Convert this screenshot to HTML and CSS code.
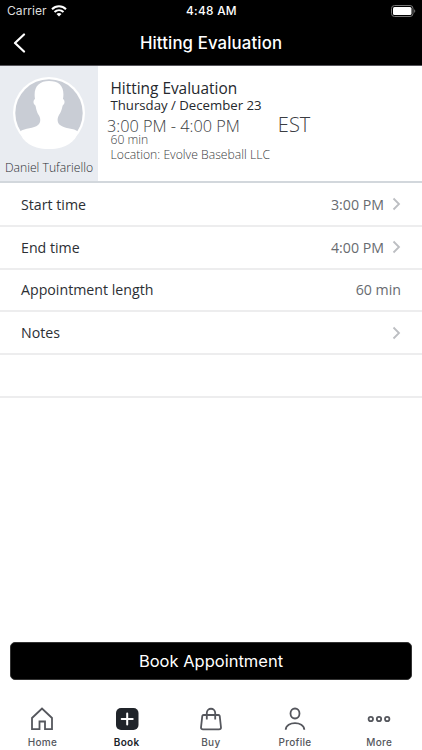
FILE: index.html
```html
<!DOCTYPE html>
<html lang="en">
<head>
<meta charset="utf-8">
<title>Hitting Evaluation</title>
<link rel="stylesheet" href="styles.css">
</head>
<body>
<div class="app">
  <header class="top">
    <div class="status">
      <div class="carrier"><span>Carrier</span>
        <svg width="16" height="12" viewBox="0 0 16 12" fill="none" stroke="#fff" stroke-width="2"><path d="M1 4.2C5 .3 11 .3 15 4.2M3.5 7C6.1 4.5 9.9 4.5 12.5 7"/><path d="M5.5 8.9C7 7.6 9 7.6 10.5 8.9L8 11.5Z" fill="#fff" stroke="none"/></svg>
      </div>
      <div class="clock">4:48 AM</div>
      <svg class="battery" width="25" height="12" viewBox="0 0 25 12"><rect x=".5" y=".5" width="21.5" height="11" rx="3" fill="none" stroke="#777"/><rect x="2" y="2" width="18.5" height="8" rx="1.5" fill="#fff"/><path d="M23.2 4.2C24.6 4.7 24.6 7.3 23.2 7.8Z" fill="#777"/></svg>
    </div>
    <div class="nav">
      <svg width="13" height="20" viewBox="0 0 13 20" fill="none" stroke="#fff" stroke-width="2.2" stroke-linecap="round" stroke-linejoin="round"><path d="M11 1.5 2 10l9 8.5"/></svg>
      <h1>Hitting Evaluation</h1>
      <span></span>
    </div>
  </header>
  <section class="summary">
    <div class="person">
      <svg width="72" height="72" viewBox="0 0 72 72"><circle cx="36" cy="36" r="36" fill="#fff"/><circle cx="36" cy="36" r="33.7" fill="#c9cdd5"/><path d="M7 54.500C12 51 21 51.500 25 48C28 45 28 41 25 37C23 33 23 29 22 28C20 27 20 23 22 22C20 10 26 4 36 4C47 4 52 10 50 22C52 23 52 27 50 28C49 30 49 34 46 38C44 42 44 45 47 48C52 52 61 51 65 54.500C61 78 11 78 7 54.500Z" fill="#fff"/></svg>
      <div class="name">Daniel Tufariello</div>
    </div>
    <div class="details">
      <div class="service">Hitting Evaluation</div>
      <div class="date">Thursday / December 23</div>
      <div class="time"><span>3:00 PM - 4:00 PM</span><span class="zone">EST</span></div>
      <div class="length">60 min</div>
      <div class="place">Location: Evolve Baseball LLC</div>
    </div>
  </section>
  <main class="rows">
    <div class="row"><span>Start time</span><span class="value">3:00 PM</span><svg class="chev" viewBox="0 0 9 14"><path d="M1.500 1.500 7 7l-5.500 5.500"/></svg></div>
    <div class="row"><span>End time</span><span class="value">4:00 PM</span><svg class="chev" viewBox="0 0 9 14"><path d="M1.500 1.500 7 7l-5.500 5.500"/></svg></div>
    <div class="row"><span>Appointment length</span><span class="value">60 min</span></div>
    <div class="row"><span>Notes</span><span class="value"></span><svg class="chev" viewBox="0 0 9 14"><path d="M1.500 1.500 7 7l-5.500 5.500"/></svg></div>
    <div class="row"></div>
  </main>
  <button class="book">Book Appointment</button>
  <nav class="tabs">
    <div class="tab"><svg viewBox="0 0 24 24"><path d="M2 22.200V11L12 1.500 22 11V22.200H15V14.500H9.500V22.200Z"/></svg><span>Home</span></div>
    <div class="tab active"><svg viewBox="0 0 24 24"><rect x="1" y="1" width="22.500" height="22" rx="5" fill="#20242a" stroke="none"/><path d="M12.200 6.500V17.500M6.700 12H17.700" stroke="#fff" stroke-width="2" stroke-linecap="round"/></svg><span>Book</span></div>
    <div class="tab"><svg viewBox="0 0 24 24"><path d="M4.500 8H19.500Q20.500 8 20.700 9L22 20.500Q22 22.300 20 22.300H4Q2 22.300 2 20.500L3.300 9Q3.500 8 4.500 8ZM7.800 12.500V6C7.800 .3 16.200 .3 16.200 6V12.500"/></svg><span>Buy</span></div>
    <div class="tab"><svg viewBox="0 0 24 24"><ellipse cx="12" cy="6.500" rx="4.500" ry="5"/><path d="M2.700 22.700C3 14 21 14 21.300 22.700"/></svg><span>Profile</span></div>
    <div class="tab"><svg viewBox="0 0 24 24"><circle cx="3.800" cy="12" r="2.200"/><circle cx="12" cy="12" r="2.200"/><circle cx="20.200" cy="12" r="2.200"/></svg><span>More</span></div>
  </nav>
</div>
</body>
</html>
```
FILE: styles.css
```css
* { box-sizing: border-box; }
body { margin: 0; background: #fff; font-family: "Open Sans", sans-serif; color: #2c2f34; }
svg { display: block; flex: none; }
.app { width: 422px; height: 750px; display: flex; flex-direction: column; overflow: hidden; white-space: nowrap; }
.top { height: 66px; background: #000; color: #fff; font-family: Inter, sans-serif; border-bottom: 1px solid #55545a; }
.status { height: 21px; display: grid; grid-template-columns: 1fr auto 1fr; align-items: center; padding: 0 6px 0 7px; font-size: 11.800px; }
.carrier { display: flex; align-items: center; gap: 4px; font-size: 12.100px; }
.carrier span { color: #ddd; }
.clock { font-weight: 500; letter-spacing: .3px; }
.battery { justify-self: end; }
.nav { height: 43px; display: grid; grid-template-columns: 1fr auto 1fr; align-items: center; padding: 0 13px; }
.nav h1 { margin: 0; font-size: 16.800px; font-weight: 500; letter-spacing: .12px; }
.summary { height: 117px; display: flex; border-bottom: 2px solid #d2d7dc; }
.person { width: 98px; background: #e9ecf1; display: flex; flex-direction: column; align-items: center; padding-top: 11px; }
.name { margin-top: 10px; line-height: 18px; font-size: 12.200px; font-weight: 300; color: #2c2f34; }
.details { padding: 13px 0 0 12.500px; font-weight: 300; color: #3a3d42; }
.service { font-size: 15.400px; line-height: 20px; font-weight: 400; color: #25282d; }
.date { font-size: 13.200px; line-height: 13px; font-weight: 400; color: #25282d; }
.time { margin: 8px 0 0 -3.500px; height: 12px; line-height: 12px; font-size: 16.300px; display: flex; }
.zone { font-size: 20px; line-height: 9px; margin-left: 38px; }
.length { font-size: 12.200px; line-height: 16px; }
.place { font-size: 12.200px; line-height: 13px; }
.rows { padding-top: 1px; }
.row { height: 42.800px; display: flex; align-items: center; padding: 0 21px; border-bottom: 2px solid #ededee; font-size: 14.200px; }
.value { margin-left: auto; color: #686b70; }
.chev { width: 9px; height: 14px; margin: 0 0 0 8px; fill: none; stroke: #bcbec2; stroke-width: 1.800; }
.book { margin: auto 10.400px 0; height: 38px; flex: none; border: 1px solid #333; border-radius: 5px; background: #000; color: #fff; font: 400 16.500px Inter, sans-serif; letter-spacing: 0; padding: 0; }
.tabs { height: 70px; flex: none; padding-top: 27px; display: grid; grid-template-columns: repeat(5, 84.200px); padding-left: .4px; }
.tab { display: flex; flex-direction: column; align-items: center; font: 500 10px Inter, sans-serif; letter-spacing: .3px; color: #55575d; }
.tab svg { width: 24px; height: 24px; fill: none; stroke: #55575d; stroke-width: 1.800; }
.tab span { line-height: 14px; margin-top: 4px; }
.active { color: #20242a; font-weight: 600; }
```
